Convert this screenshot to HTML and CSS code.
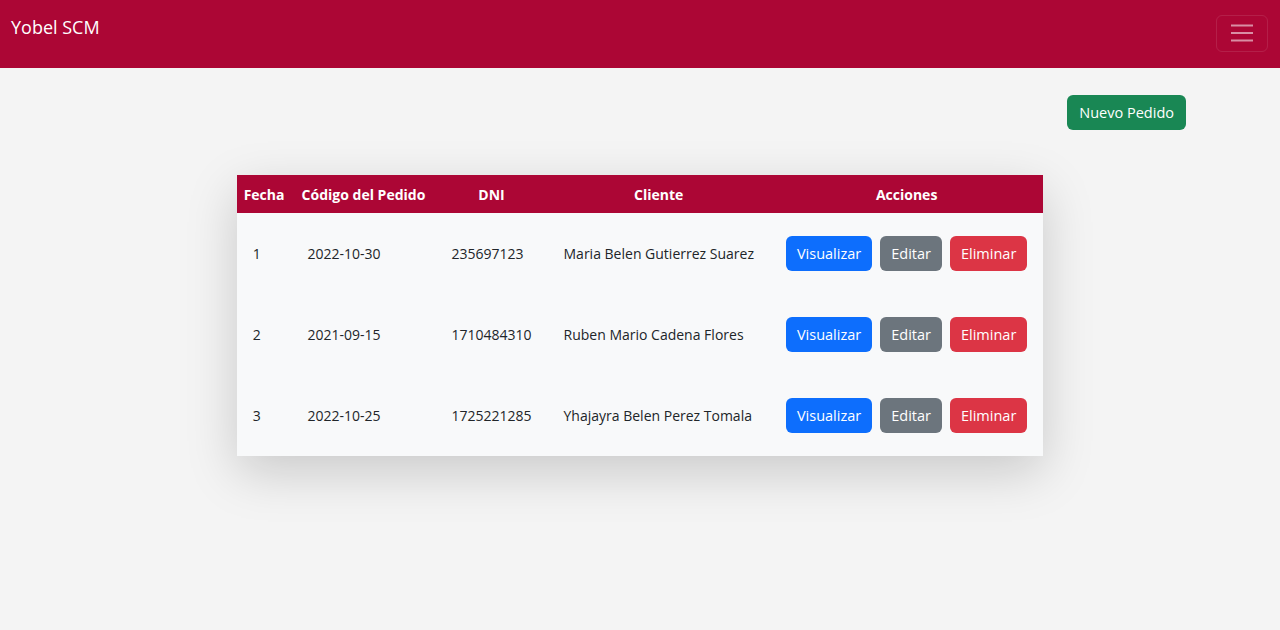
FILE: index.html
```html
<!DOCTYPE html>
<html lang="es">

<head>
    <meta charset="UTF-8">
    <meta name="viewport" content="width=device-width, initial-scale=1.0">
    <title>Yobel SCM - Pedidos</title>
    <link rel="stylesheet" href="styles.css">
</head>

<body>
    <header class="navbar">
        <a class="navbar-brand" href="#">Yobel SCM</a>
        <button class="navbar-toggler" aria-label="Menu">
            <span class="toggler-icon"></span>
        </button>
    </header>

    <main>
        <div class="toolbar">
            <button class="btn btn-success">Nuevo Pedido</button>
        </div>

        <!-- tabla de pedidos -->
        <div class="table-card">
            <table class="orders">
                <thead>
                    <tr>
                        <th>Fecha</th>
                        <th class="col-code">Código del Pedido</th>
                        <th>DNI</th>
                        <th>Cliente</th>
                        <th>Acciones</th>
                    </tr>
                </thead>
                <tbody>
                    <tr>
                        <td>1</td>
                        <td>2022-10-30</td>
                        <td>235697123</td>
                        <td>Maria Belen Gutierrez Suarez</td>
                        <td>
                            <div class="actions">
                                <button class="btn btn-primary">Visualizar</button>
                                <button class="btn btn-secondary">Editar</button>
                                <button class="btn btn-danger">Eliminar</button>
                            </div>
                        </td>
                    </tr>
                    <tr>
                        <td>2</td>
                        <td>2021-09-15</td>
                        <td>1710484310</td>
                        <td>Ruben Mario Cadena Flores</td>
                        <td>
                            <div class="actions">
                                <button class="btn btn-primary">Visualizar</button>
                                <button class="btn btn-secondary">Editar</button>
                                <button class="btn btn-danger">Eliminar</button>
                            </div>
                        </td>
                    </tr>
                    <tr>
                        <td>3</td>
                        <td>2022-10-25</td>
                        <td>1725221285</td>
                        <td>Yhajayra Belen Perez Tomala</td>
                        <td>
                            <div class="actions">
                                <button class="btn btn-primary">Visualizar</button>
                                <button class="btn btn-secondary">Editar</button>
                                <button class="btn btn-danger">Eliminar</button>
                            </div>
                        </td>
                    </tr>
                </tbody>
            </table>
        </div>
    </main>
</body>

</html>
```

FILE: styles.css
```css
/* base */

body {
    margin: 0;
    min-height: 100vh;
    background-color: #f4f4f4;
    color: #212529;
    font-family: "Open Sans", "Noto Sans", sans-serif;
    font-size: 14px;
}

/* navbar */

.navbar {
    height: 68px;
    background-color: #ac0635;
    display: flex;
    justify-content: space-between;
    align-items: center;
    padding: 0 12px 0 11px;
}

.navbar-brand {
    color: #fff;
    text-decoration: none;
    font-size: 18px;
    align-self: flex-start;
    margin-top: 15px;
}

.navbar-toggler {
    width: 52px;
    height: 37px;
    margin-top: -2px;
    background: transparent;
    border: 1px solid rgba(255, 255, 255, 0.1);
    border-radius: 6px;
    display: flex;
    align-items: center;
    justify-content: center;
    padding: 0;
}

.toggler-icon {
    display: block;
    width: 22px;
    height: 2px;
    background-color: rgba(255, 255, 255, 0.55);
    box-shadow: 0 -7.5px 0 rgba(255, 255, 255, 0.55), 0 7.5px 0 rgba(255, 255, 255, 0.55);
}

/* botones */

.btn {
    font-family: inherit;
    font-size: 14.5px;
    line-height: 21px;
    padding: 6px 11px;
    border: 1px solid transparent;
    border-radius: 6px;
    color: #fff;
    cursor: pointer;
}

.actions .btn {
    padding: 6px 10px;
}

.btn-success {
    background-color: #198754;
}

.btn-primary {
    background-color: #0d6efd;
}

.btn-secondary {
    background-color: #6c757d;
}

.btn-danger {
    background-color: #dc3545;
}

/* contenido */

main {
    padding-bottom: 120px;
}

.toolbar {
    display: flex;
    justify-content: flex-end;
    padding: 27px 94px 0;
}

.table-card {
    width: fit-content;
    margin: 45px auto 0;
    background-color: #f8f9fa;
    box-shadow: 0 16px 48px rgba(0, 0, 0, 0.175);
}

.orders {
    border-collapse: collapse;
}

.orders th {
    background-color: #ac0635;
    color: #fff;
    font-weight: 700;
    height: 38px;
    padding: 0 7px;
    text-align: center;
}

.orders th.col-code {
    min-width: 130px;
}

.orders td {
    height: 81px;
    padding: 0 16px;
    vertical-align: middle;
    white-space: nowrap;
}

.actions {
    display: flex;
    gap: 8px;
    align-items: center;
}
```
